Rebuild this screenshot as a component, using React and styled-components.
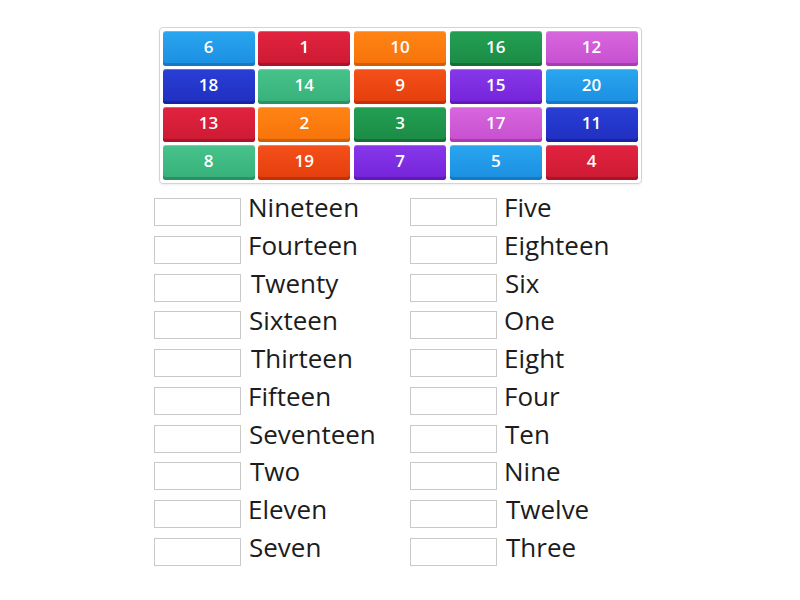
import React from 'react';
import styled, { createGlobalStyle } from "styled-components";

const tiles = [
    { n: 6, c: "blue" }, { n: 1, c: "red" }, { n: 10, c: "orange" }, { n: 16, c: "green" }, { n: 12, c: "pink" },
    { n: 18, c: "navy" }, { n: 14, c: "mint" }, { n: 9, c: "fire" }, { n: 15, c: "violet" }, { n: 20, c: "blue" },
    { n: 13, c: "red" }, { n: 2, c: "orange" }, { n: 3, c: "green" }, { n: 17, c: "pink" }, { n: 11, c: "navy" },
    { n: 8, c: "mint" }, { n: 19, c: "fire" }, { n: 7, c: "violet" }, { n: 5, c: "blue" }, { n: 4, c: "red" },
];

const palette = {
    blue: ["#2aa6f0", "#1b8ee0", "#1679c4"],
    red: ["#e2233f", "#cc1a33", "#a9142a"],
    orange: ["#ff8414", "#f7730a", "#d25f06"],
    green: ["#22a052", "#1c8a45", "#166f37"],
    pink: ["#d867de", "#c64fcf", "#a83db1"],
    navy: ["#2a3fd6", "#1f2fc0", "#1825a0"],
    mint: ["#48c28b", "#37b079", "#2b9163"],
    fire: ["#f5501a", "#e33e0c", "#c03208"],
    violet: ["#8838ea", "#7423d9", "#5e1bb5"],
};

const left = [
    ["Nineteen", 0], ["Fourteen", 0], ["Twenty", 3], ["Sixteen", 1], ["Thirteen", 3],
    ["Fifteen", 0], ["Seventeen", 1], ["Two", 2], ["Eleven", 0], ["Seven", 1],
];

const right = [
    ["Five", 0], ["Eighteen", 0], ["Six", 1], ["One", 0], ["Eight", 0],
    ["Four", 0], ["Ten", 1], ["Nine", 0], ["Twelve", 2], ["Three", 2],
];

function App() {
    return (
        <Page>
            <GlobalStyle />
            <Board>
                {tiles.map((t) => (
                    <Tile key={t.n} $color={t.c}>{t.n}</Tile>
                ))}
            </Board>
            <Lists>
                {[left, right].map((col, i) => (
                    <Column key={i}>
                        {col.map(([word, shift]) => (
                            <Row key={word}>
                                <Slot />
                                <Word $shift={shift}>{word}</Word>
                            </Row>
                        ))}
                    </Column>
                ))}
            </Lists>
        </Page>
    )
};

const GlobalStyle = createGlobalStyle`
    body {
        margin: 0;
        background: #ffffff;
        font-family: "Open Sans", "Liberation Sans", sans-serif;
    }
`

const Page = styled.div`
    width: 800px;
    height: 600px;
    padding-top: 27px;
    box-sizing: border-box;
`

const Board = styled.div`
    width: 483px;
    margin: 0 auto;
    box-sizing: border-box;
    padding: 3px;
    border: 1px solid #d4d4d4;
    border-radius: 4px;
    display: grid;
    grid-template-columns: repeat(5, 92px);
    grid-auto-rows: 35px;
    gap: 3px 3.75px;
    box-shadow: 0 1px 2px rgba(0, 0, 0, 0.08);
`

const Tile = styled.div`
    display: flex;
    align-items: center;
    justify-content: center;
    padding-bottom: 4px;
    box-sizing: border-box;
    border-radius: 3px;
    color: #ffffff;
    font-weight: 600;
    font-size: 17px;
    background: linear-gradient(${(p) => palette[p.$color][0]}, ${(p) => palette[p.$color][1]});
    box-shadow: inset 0 -3px 0 ${(p) => palette[p.$color][2]}, inset 0 1px 0 rgba(255, 255, 255, 0.25);
`

const Lists = styled.div`
    margin: 14px 0 0 154px;
    display: grid;
    grid-template-columns: 256px 256px;
`

const Column = styled.div`
    display: flex;
    flex-direction: column;
    gap: 9.75px;
`

const Row = styled.div`
    display: flex;
    align-items: flex-start;
    height: 28px;
`

const Slot = styled.div`
    width: 87px;
    height: 28px;
    box-sizing: border-box;
    border: 1px solid #c9c9c9;
    flex-shrink: 0;
`

const Word = styled.span`
    margin-left: ${(p) => 7 + p.$shift}px;
    margin-top: -9px;
    font-size: 26px;
    line-height: 36px;
    color: #1c1c1c;
    white-space: nowrap;
`

export default App
